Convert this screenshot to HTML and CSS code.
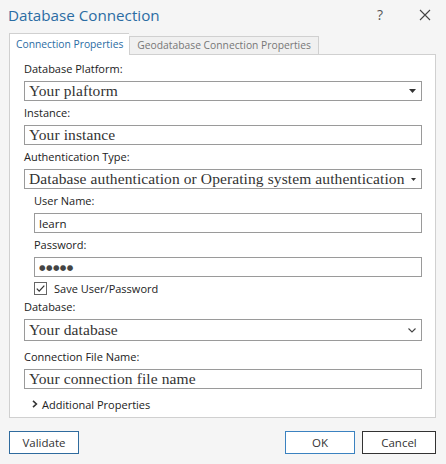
FILE: index.html
```html
<!DOCTYPE html>
<html>
<head>
<meta charset="utf-8">
<link rel="stylesheet" href="styles.css">
</head>
<body>
<div class="dialog">
  <div class="titlebar">
    <div class="title">Database Connection</div>
    <div class="actions">
      <span class="help">?</span>
      <svg class="close" width="12" height="12" viewBox="0 0 12 12"><path d="M1 1L11 11M11 1L1 11" stroke="#444" stroke-width="1.1" fill="none"/></svg>
    </div>
  </div>
  <div class="tabs">
    <div class="tab active">Connection Properties</div>
    <div class="tab">Geodatabase Connection Properties</div>
  </div>
  <div class="panel">
    <div class="group">
      <div class="label">Database Platform:</div>
      <div class="field select">
        <span class="value serif">Your plaftorm</span>
        <svg class="arrow" width="7" height="4" viewBox="0 0 7 4"><path d="M0 0H7L3.5 4Z" fill="#333"/></svg>
      </div>
    </div>
    <div class="group">
      <div class="label">Instance:</div>
      <div class="field"><span class="value serif">Your instance</span></div>
    </div>
    <div class="group">
      <div class="label">Authentication Type:</div>
      <div class="field select">
        <span class="value serif">Database authentication or Operating system authentication</span>
        <svg class="arrow" width="5" height="3" viewBox="0 0 5 3"><path d="M0 0H5L2.5 3Z" fill="#333"/></svg>
      </div>
    </div>
    <div class="sub">
      <div class="group">
        <div class="label">User Name:</div>
        <div class="field"><span class="value sans">learn</span></div>
      </div>
      <div class="group">
        <div class="label">Password:</div>
        <div class="field"><span class="value dots">●●●●●</span></div>
      </div>
      <div class="check">
        <svg width="13" height="13" viewBox="0 0 13 13"><rect x="0.5" y="0.5" width="12" height="12" fill="#fff" stroke="#666"/><path d="M2.8 6.6L5.2 9.1L10.3 3.6" stroke="#333" stroke-width="1.3" fill="none"/></svg>
        <span>Save User/Password</span>
      </div>
    </div>
    <div class="group">
      <div class="label">Database:</div>
      <div class="field select tall">
        <span class="value serif">Your database</span>
        <svg class="arrow" width="8" height="5" viewBox="0 0 8 5"><path d="M0.5 0.5L4 4L7.5 0.5" stroke="#444" stroke-width="1.1" fill="none"/></svg>
      </div>
    </div>
    <div class="group wide">
      <div class="label">Connection File Name:</div>
      <div class="field"><span class="value serif">Your connection file name</span></div>
    </div>
    <div class="expander">
      <svg width="6" height="8" viewBox="0 0 6 8"><path d="M1 0.8L4.4 4L1 7.2" stroke="#333" stroke-width="1.6" fill="none"/></svg>
      <span>Additional Properties</span>
    </div>
  </div>
  <div class="footer">
    <button class="btn validate">Validate</button>
    <div class="right">
      <button class="btn ok">OK</button>
      <button class="btn cancel">Cancel</button>
    </div>
  </div>
</div>
</body>
</html>
```
FILE: styles.css
```css
html, body {
  margin: 0;
  padding: 0;
  background: #f5f5f5;
}
.dialog {
  width: 446px;
  height: 464px;
  font-family: "Open Sans", "Noto Sans", sans-serif;
  color: #222;
}
.titlebar {
  height: 34px;
  display: flex;
  align-items: flex-start;
  justify-content: space-between;
  padding-left: 8px;
  box-sizing: border-box;
}
.title {
  font-size: 15.2px;
  line-height: 20px;
  margin-top: 5px;
  color: #2b6ca3;
}
.actions {
  display: flex;
  align-items: center;
  margin-top: 8px;
  margin-right: 15px;
}
.help {
  font-size: 14px;
  line-height: 14px;
  color: #555;
  margin-right: 36px;
}
.close {
  display: block;
}
.tabs {
  display: flex;
  align-items: flex-end;
  margin-left: 9px;
  height: 21px;
  position: relative;
  z-index: 1;
}
.tab {
  font-size: 10.3px;
  line-height: 17px;
  height: 17px;
  padding: 0 7px 0 7px;
  border: 1px solid #d0d0d0;
  border-bottom: none;
  background: #f0f0f0;
  color: #777;
}
.tab.active {
  height: 21px;
  line-height: 20px;
  background: #fff;
  color: #2b6ca3;
  border-right: none;
  padding: 0 6px;
}
.tab + .tab {
  border-bottom: 1px solid #d0d0d0;
  height: 19px;
  box-sizing: border-box;
  line-height: 17px;
}
.panel {
  margin-left: 9px;
  width: 427px;
  height: 364px;
  box-sizing: border-box;
  border: 1px solid #d0d0d0;
  background: #fff;
  padding: 6px 13px 0 14px;
  display: flex;
  flex-direction: column;
}
.tabs + .panel {
  margin-top: -1px;
}
.group {
  display: flex;
  flex-direction: column;
  margin-bottom: 4px;
}
.label {
  font-size: 11px;
  line-height: 16px;
  height: 16px;
  margin-bottom: 4px;
  color: #222;
}
.field {
  height: 20px;
  box-sizing: border-box;
  border: 1px solid #9a9a9a;
  background: #fff;
  display: flex;
  align-items: center;
  padding-left: 4px;
  padding-right: 5px;
}
.field.tall {
  height: 22px;
}
.select {
  justify-content: space-between;
}
.value {
  white-space: nowrap;
  overflow: hidden;
}
.serif {
  font-family: "Liberation Serif", serif;
  font-size: 15.5px;
  color: #333;
  letter-spacing: 0.1px;
}
.sans {
  font-size: 11.5px;
  color: #222;
}
.dots {
  font-family: "DejaVu Sans", sans-serif;
  font-size: 7.5px;
  letter-spacing: 0.4px;
  color: #444;
}
.arrow {
  display: block;
  flex: none;
}
.sub {
  margin-left: 10px;
  display: flex;
  flex-direction: column;
}
.check {
  display: flex;
  align-items: center;
  height: 14px;
  margin-bottom: 4px;
  font-size: 11px;
}
.check svg {
  display: block;
  margin-right: 7px;
}
.group.wide {
  margin-top: 4px;
}
.expander {
  display: flex;
  align-items: center;
  margin-top: 2px;
  height: 18px;
  font-size: 11px;
  padding-left: 8px;
}
.expander svg {
  display: block;
  margin-right: 4px;
}
.footer {
  display: flex;
  justify-content: space-between;
  margin: 13px 10px 0 9px;
}
.right {
  display: flex;
  gap: 7px;
}
.btn {
  font-family: "Open Sans", "Noto Sans", sans-serif;
  font-size: 11.5px;
  color: #333;
  background: #fff;
  height: 23px;
  width: 70px;
  border: 1px solid #333;
  padding: 0;
  margin: 0;
}
.validate {
  border-color: #2f6b9e;
}
.ok {
  border-color: #3b82c0;
}
.cancel {
  width: 74px;
  border-color: #333;
}
```
